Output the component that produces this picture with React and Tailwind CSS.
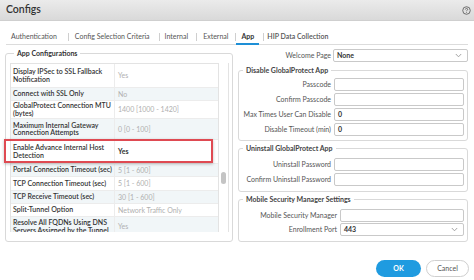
import React from "react";

const rows = [
  { l: ["Display IPSec to SSL Fallback", "Notification"], v: "Yes", h: "h-[24px]", bg: "bg-white" },
  { l: ["Connect with SSL Only"], v: "No", h: "h-[13px]", bg: "bg-[#f1f6f8]" },
  { l: ["GlobalProtect Connection MTU", "(bytes)"], v: "1400 [1000 - 1420]", h: "h-[18px]", bg: "bg-white" },
  { l: ["Maximum Internal Gateway", "Connection Attempts"], v: "0 [0 - 100]", h: "h-[21px]", bg: "bg-[#f1f6f8]" },
  { l: ["Enable Advance Internal Host", "Detection"], v: "Yes", h: "h-[24px]", bg: "bg-white", dark: true },
  { l: ["Portal Connection Timeout (sec)"], v: "5 [1 - 600]", h: "h-[13px]", bg: "bg-[#f1f6f8]" },
  { l: ["TCP Connection Timeout (sec)"], v: "5 [1 - 600]", h: "h-[14px]", bg: "bg-white" },
  { l: ["TCP Receive Timeout (sec)"], v: "30 [1 - 600]", h: "h-[13px]", bg: "bg-[#f1f6f8]" },
  { l: ["Split-Tunnel Option"], v: "Network Traffic Only", h: "h-[13px]", bg: "bg-white" },
  { l: ["Resolve All FQDNs Using DNS", "Servers Assigned by the Tunnel"], v: "Yes", h: "h-[20px]", bg: "bg-[#f1f6f8]" },
];

function Chevron() {
  return (
    <svg width="7" height="5" viewBox="0 0 7 5" className="shrink-0">
      <path d="M0.8 1 L3.5 3.8 L6.2 1" fill="none" stroke="#9a9a9a" strokeWidth="0.9" />
    </svg>
  );
}

function Input({ value }) {
  return (
    <div className="flex-1 h-[13px] border border-[#c9c9c9] rounded-[2px] bg-white flex items-center pl-[3px] text-[7px] font-bold text-[#333]">
      {value}
    </div>
  );
}

function Select({ value }) {
  return (
    <div className="flex-1 h-[13px] border border-[#c9c9c9] rounded-[2px] bg-white flex items-center justify-between pl-[3px] pr-[5px] text-[7px] font-bold text-[#333]">
      <span>{value}</span>
      <Chevron />
    </div>
  );
}

function FormRow({ label, lw, children, mt = "" }) {
  return (
    <div className={`flex items-center ${mt}`}>
      <div className={`${lw} shrink-0 text-right pr-[3px] text-[7px] text-[#555]`}>{label}</div>
      {children}
    </div>
  );
}

export default function App() {
  return (
    <div
      className="w-[474px] h-[280px] bg-white relative overflow-hidden text-[#333]"
      style={{ fontFamily: "Lato, 'Open Sans', sans-serif" }}
    >
      {/* Title bar */}
      <div className="h-[21px] bg-gradient-to-b from-[#ebebeb] to-[#d9d9d9] border-b border-[#cfcfcf] flex items-center justify-between pl-[6px] pr-[3px]">
        <span className="text-[10.5px] font-semibold text-[#333]">Configs</span>
        <svg width="9" height="9" viewBox="0 0 10 10">
          <circle cx="5" cy="5" r="4.2" fill="none" stroke="#555" strokeWidth="0.9" />
          <path d="M3.7 3.9 Q3.8 2.7 5 2.7 Q6.3 2.7 6.3 3.8 Q6.3 4.5 5.4 4.9 Q5 5.1 5 5.8" fill="none" stroke="#555" strokeWidth="0.9" />
          <circle cx="5" cy="7.2" r="0.55" fill="#555" />
        </svg>
      </div>

      {/* Tabs */}
      <div className="mx-[6px] mt-[8px] h-[16px] border-b border-[#dcdcdc] flex items-stretch text-[7px] text-[#555]">
        <div className="flex items-center pl-[5px] pr-[11px]">Authentication</div>
        <div className="w-px h-[8px] bg-[#cfcfcf] self-center" />
        <div className="flex items-center pl-[6px] pr-[9px]">Config Selection Criteria</div>
        <div className="w-px h-[8px] bg-[#cfcfcf] self-center" />
        <div className="flex items-center pl-[5px] pr-[8px]">Internal</div>
        <div className="w-px h-[8px] bg-[#cfcfcf] self-center" />
        <div className="flex items-center pl-[6px] pr-[7px]">External</div>
        <div className="w-px h-[8px] bg-[#cfcfcf] self-center" />
        <div className="flex items-center px-[5px] font-bold text-[#333] border-b-2 border-[#1e8fd6] -mb-px">App</div>
        <div className="w-px h-[8px] bg-[#cfcfcf] self-center ml-[4px]" />
        <div className="flex items-center pl-[3px] font-semibold">HIP Data Collection</div>
      </div>

      {/* Content */}
      <div className="flex mt-[3px] pl-[5px]">
        {/* Left fieldset */}
        <fieldset className="w-[228px] h-[194px] border border-[#d9d9d9] rounded-[3px] pl-[4px] pr-[3px] pb-[8px]">
          <legend className="ml-[4px] px-[3px] text-[7px] font-bold text-[#333] leading-[10px]">App Configurations</legend>
          <div className="flex mt-[5px] h-[169px]">
            <div className="w-[209px] h-[169px] overflow-hidden border border-[#e3e3e3] border-b-0">
              {rows.map((r, i) => (
                <div key={i} className={`flex ${r.h} ${r.bg} border-b border-[#ececec] shrink-0`}>
                  <div className="w-[104px] shrink-0 flex flex-col justify-center pl-[2px] text-[7px] leading-[7.5px] font-semibold text-[#333] border-r border-[#ececec]">
                    {r.l.map((t, j) => (
                      <span key={j} className="whitespace-nowrap">{t}</span>
                    ))}
                  </div>
                  <div className={`flex-1 flex items-center pl-[3px] text-[7px] ${r.dark ? "text-[#333] font-bold" : "text-[#b0b0b0]"}`}>
                    {r.v}
                  </div>
                </div>
              ))}
            </div>
            <div className="w-[10px] h-[169px] border-r border-[#e3e3e3] bg-white flex justify-center pt-[109px]">
              <div className="w-[5px] h-[12px] rounded-[3px] bg-[#c4c4c4]" />
            </div>
          </div>
        </fieldset>

        {/* Right column */}
        <div className="ml-[5px] w-[230px] flex flex-col">
          <div className="flex items-center mt-[1px]">
            <div className="w-[95px] shrink-0 text-right pr-[2px] text-[7px] text-[#555]">Welcome Page</div>
            <Select value="None" />
          </div>

          <fieldset className="mt-[3px] border border-[#d9d9d9] rounded-[3px] pr-[3px] pb-[4px]">
            <legend className="ml-[4px] px-[3px] text-[7px] font-bold text-[#444] leading-[10px]">Disable GlobalProtect App</legend>
            <div className="pt-[3px]">
              <FormRow label="Passcode" lw="w-[95px]"><Input value="" /></FormRow>
              <FormRow label="Confirm Passcode" lw="w-[95px]" mt="mt-[2px]"><Input value="" /></FormRow>
              <FormRow label="Max Times User Can Disable" lw="w-[95px]" mt="mt-[2px]"><Input value="0" /></FormRow>
              <FormRow label="Disable Timeout (min)" lw="w-[95px]" mt="mt-[2px]"><Input value="0" /></FormRow>
            </div>
          </fieldset>

          <fieldset className="mt-[2px] border border-[#d9d9d9] rounded-[3px] pr-[3px] pb-[5px]">
            <legend className="ml-[4px] px-[3px] text-[7px] font-bold text-[#444] leading-[10px]">Uninstall GlobalProtect App</legend>
            <div className="pt-[5px]">
              <FormRow label="Uninstall Password" lw="w-[95px]"><Input value="" /></FormRow>
              <FormRow label="Confirm Uninstall Password" lw="w-[95px]" mt="mt-[2px]"><Input value="" /></FormRow>
            </div>
          </fieldset>

          <fieldset className="mt-[2px] border border-[#d9d9d9] rounded-[3px] pr-[3px] pb-[5px]">
            <legend className="ml-[4px] px-[3px] text-[7px] font-bold text-[#444] leading-[10px]">Mobile Security Manager Settings</legend>
            <div className="pt-[5px]">
              <FormRow label="Mobile Security Manager" lw="w-[101px]"><Input value="" /></FormRow>
              <FormRow label="Enrollment Port" lw="w-[101px]" mt="mt-[1px]"><Select value="443" /></FormRow>
            </div>
          </fieldset>
        </div>
      </div>

      {/* Footer buttons */}
      <div className="flex justify-end gap-[5px] pr-[5px] mt-[18px]">
        <div className="w-[45px] h-[17px] rounded-full bg-[#1f9be0] text-white text-[7px] font-bold flex items-center justify-center">OK</div>
        <div className="w-[43px] h-[17px] rounded-full bg-white border border-[#cfcfcf] text-[#555] text-[7px] flex items-center justify-center">Cancel</div>
      </div>

      {/* Red highlight overlay */}
      <div className="absolute left-[4px] top-[139px] w-[209px] h-[24px] border-2 border-[#df4a52] shadow-[0_1px_3px_rgba(0,0,0,0.25)]" />
    </div>
  );
}
